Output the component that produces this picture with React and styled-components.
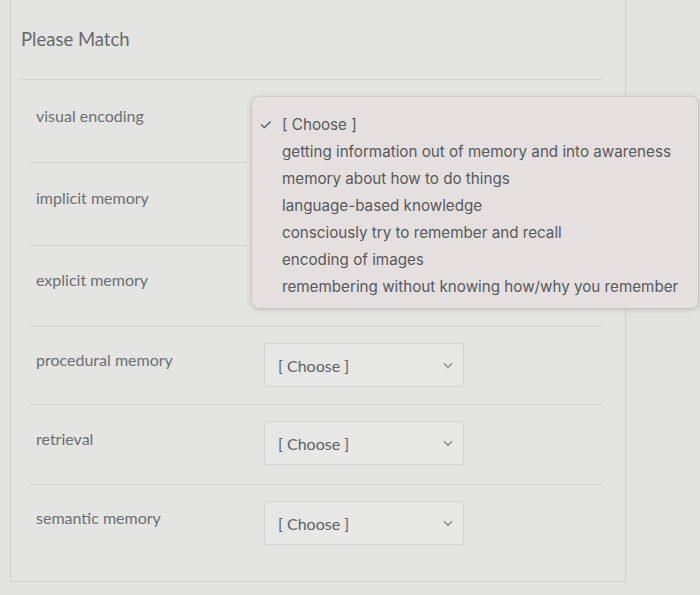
import React from "react";
import styled, { createGlobalStyle } from "styled-components";

const GlobalStyle = createGlobalStyle`
  html, body {
    margin: 0;
    padding: 0;
    background: #e2e2e0;
  }
  body {
    font-family: Lato, "Liberation Sans", sans-serif;
  }
`;

const Page = styled.div`
  width: 700px;
  height: 595px;
  overflow: hidden;
  position: relative;
`;

const Card = styled.div`
  margin-left: 10px;
  width: 616px;
  height: 582px;
  box-sizing: border-box;
  border: 1px solid #cfcfcd;
  border-top: none;
  padding: 0 22px 0 18px;
  background: #e4e4e2;
`;

const Header = styled.div`
  height: 80px;
  box-sizing: border-box;
  padding: 28px 0 0 2px;
  border-bottom: 1px solid #d4d4d2;
  margin-left: -10px;
  font-size: 18.5px;
  color: #67696e;
`;

const Row = styled.div`
  display: flex;
  align-items: flex-start;
  height: ${(p) => p.$h}px;
  box-sizing: border-box;
  padding: 16px 0 0 7px;
  border-bottom: ${(p) => (p.$last ? "none" : "1px solid #d4d4d2")};
`;

const Label = styled.div`
  width: 228px;
  padding-top: ${(p) => p.$top}px;
  font-size: 16px;
  color: #6c6f74;
`;

const SelectWrap = styled.div`
  position: relative;
`;

const Select = styled.div`
  width: 200px;
  height: 44px;
  box-sizing: border-box;
  display: flex;
  align-items: center;
  justify-content: space-between;
  padding: 0 10px 0 13px;
  border: 1px solid #d3d3d1;
  border-radius: 3px;
  background: #e7e7e5;
  font-size: 16px;
  color: #606368;
`;

const Menu = styled.div`
  position: absolute;
  left: -12px;
  top: 1px;
  width: 446px;
  box-sizing: border-box;
  padding: 14px 0 8px;
  border-radius: 7px;
  background: #e5e0df;
  box-shadow: 0 1px 6px rgba(0, 0, 0, 0.18), 0 0 0 1px rgba(0, 0, 0, 0.04);
  font-family: Inter, "Noto Sans", sans-serif;
  font-size: 15.2px;
  color: #57595d;
  z-index: 2;
`;

const Item = styled.div`
  display: flex;
  align-items: center;
  height: 27px;
  padding-left: 7px;
  white-space: nowrap;
`;

const Check = styled.span`
  width: 23px;
  font-size: 15px;
  color: #5a5c60;
`;

const Chevron = () => (
  <svg width="10" height="7" viewBox="0 0 10 7">
    <path d="M1 1.2 L5 5.4 L9 1.2" fill="none" stroke="#8a8c90" strokeWidth="1.4" />
  </svg>
);

const terms = [
  { name: "visual encoding", h: 83, top: 10 },
  { name: "implicit memory", h: 83, top: 9 },
  { name: "explicit memory", h: 81, top: 8 },
  { name: "procedural memory", h: 78, top: 7 },
  { name: "retrieval", h: 80, top: 8 },
  { name: "semantic memory", h: 97, top: 7 },
];

const options = [
  "getting information out of memory and into awareness",
  "memory about how to do things",
  "language-based knowledge",
  "consciously try to remember and recall",
  "encoding of images",
  "remembering without knowing how/why you remember",
];

export default function App() {
  return (
    <Page>
      <GlobalStyle />
      <Card>
        <Header>Please Match</Header>
        {terms.map((t, i) => (
          <Row key={t.name} $last={i === terms.length - 1} $h={t.h}>
            <Label $top={t.top}>{t.name}</Label>
            <SelectWrap>
              {i >= 3 && (
                <Select>
                  <span>[ Choose ]</span>
                  <Chevron />
                </Select>
              )}
              {i === 0 && (
                <Menu>
                  <Item>
                    <Check>✓</Check>[ Choose ]
                  </Item>
                  {options.map((o) => (
                    <Item key={o}>
                      <Check />
                      {o}
                    </Item>
                  ))}
                </Menu>
              )}
            </SelectWrap>
          </Row>
        ))}
      </Card>
    </Page>
  );
}
